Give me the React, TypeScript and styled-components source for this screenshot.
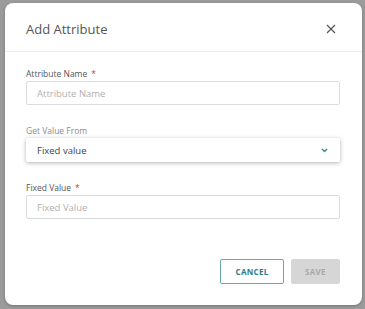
import React from 'react'
import styled, { createGlobalStyle } from 'styled-components'

const GlobalStyle = createGlobalStyle`
  html, body {
    margin: 0;
    padding: 0;
    background: #9b9b9b;
    font-family: "Open Sans", "Liberation Sans", sans-serif;
  }
`

const Backdrop = styled.div`
  width: 365px;
  height: 309px;
  box-sizing: border-box;
  padding: 3px 3px 4px 5px;
  background: #9b9b9b;
`

const Dialog = styled.div`
  width: 357px;
  height: 302px;
  box-sizing: border-box;
  background: #fff;
  border-radius: 8px;
  display: flex;
  flex-direction: column;
  box-shadow: 0 1px 3px rgba(0, 0, 0, 0.25);
`

const Header = styled.div`
  height: 48px;
  display: flex;
  align-items: center;
  justify-content: space-between;
  padding: 0 22px 0 21px;
  border-bottom: 1px solid #ececec;
`

const Title = styled.h2`
  margin: 0;
  font-size: 13px;
  font-weight: 400;
  color: #555;
  padding-top: 4px;
`

const CloseButton = styled.button`
  width: 18px;
  height: 18px;
  padding: 0;
  border: none;
  background: transparent;
  display: flex;
  align-items: center;
  justify-content: center;
  margin-top: 3px;
  cursor: pointer;
`

const Body = styled.div`
  flex: 1;
  padding: 16px 21px 0 21px;
  display: flex;
  flex-direction: column;
  align-items: flex-start;
  gap: 20px;
`

const Field = styled.div`
  width: 314px;
  display: flex;
  flex-direction: column;
  gap: 1px;
`

const Label = styled.label<{ $muted?: boolean }>`
  font-size: 8.5px;
  line-height: 12px;
  color: ${(p) => (p.$muted ? '#8a8a8a' : '#555')};
`

const Required = styled.span`
  color: #d9343a;
  margin-left: 4px;
`

const Input = styled.input`
  height: 24px;
  box-sizing: border-box;
  width: 100%;
  margin: 0;
  border: 1px solid #dcdcdc;
  border-radius: 2px;
  padding: 0 10px;
  font-family: inherit;
  font-size: 9.5px;
  color: #444;
  outline: none;
  &::placeholder {
    color: #b0b0b0;
  }
`

const Select = styled.div`
  height: 24px;
  width: 100%;
  box-sizing: border-box;
  border-radius: 2px;
  background: #fff;
  box-shadow: 0 1px 4px rgba(0, 0, 0, 0.3);
  display: flex;
  align-items: center;
  padding-left: 11px;
  padding-right: 12px;
  font-size: 9.5px;
  color: #3f3f3f;
`

const SelectValue = styled.span`
  flex: 1;
`

const Footer = styled.div`
  display: flex;
  justify-content: flex-end;
  gap: 7px;
  padding: 0 22px 21px 0;
`

const Button = styled.button<{ $primary?: boolean }>`
  height: 25px;
  box-sizing: border-box;
  padding: 0;
  width: ${(p) => (p.$primary ? '49px' : '64px')};
  border-radius: 2px;
  font-family: inherit;
  font-size: 8px;
  font-weight: 700;
  letter-spacing: 0.3px;
  border: 1px solid ${(p) => (p.$primary ? '#d6d6d6' : '#6aa9b1')};
  background: ${(p) => (p.$primary ? '#d6d6d6' : '#fff')};
  color: ${(p) => (p.$primary ? '#a9a9a9' : '#2f7c86')};
`

export default function App() {
  return (
    <>
      <GlobalStyle />
      <Backdrop>
        <Dialog>
          <Header>
            <Title>Add Attribute</Title>
            <CloseButton aria-label="close">
              <svg width="10" height="10" viewBox="0 0 10 10">
                <path d="M1 1 L9 9 M9 1 L1 9" stroke="#555" strokeWidth="1.2" fill="none" />
              </svg>
            </CloseButton>
          </Header>
          <Body>
            <Field>
              <Label>
                Attribute Name<Required>*</Required>
              </Label>
              <Input placeholder="Attribute Name" />
            </Field>
            <Field>
              <Label $muted>Get Value From</Label>
              <Select>
                <SelectValue>Fixed value</SelectValue>
                <svg width="7" height="5" viewBox="0 0 7 5">
                  <path d="M1 1 L3.5 3.5 L6 1" stroke="#3f8790" strokeWidth="1.5" fill="none" />
                </svg>
              </Select>
            </Field>
            <Field>
              <Label>
                Fixed Value<Required>*</Required>
              </Label>
              <Input placeholder="Fixed Value" />
            </Field>
          </Body>
          <Footer>
            <Button>CANCEL</Button>
            <Button $primary disabled>
              SAVE
            </Button>
          </Footer>
        </Dialog>
      </Backdrop>
    </>
  )
}
